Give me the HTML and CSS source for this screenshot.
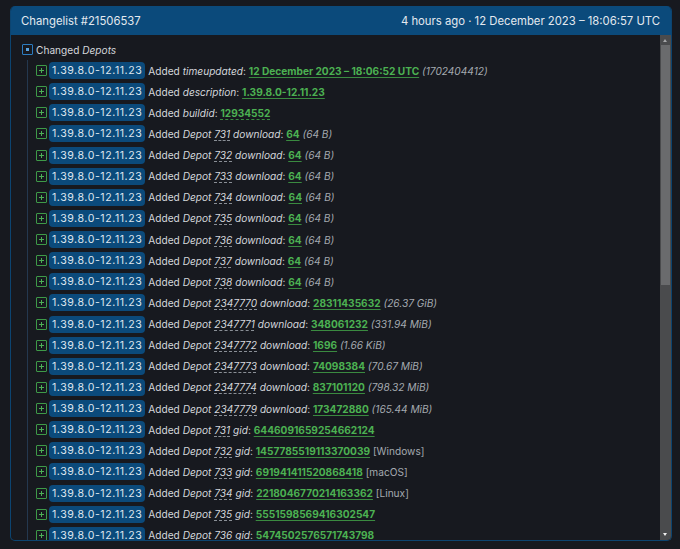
FILE: index.html
```html
<!DOCTYPE html>
<html>
<head>
<meta charset="utf-8">
<link rel="stylesheet" href="styles.css">
</head>
<body>
<div class="panel">
  <div class="header">
    <span class="title">Changelist #21506537</span>
    <span class="when">4 hours ago · 12 December 2023 – 18:06:57 UTC</span>
  </div>
  <div class="body">
    <div class="content">
      <div class="tree-head">
        <span class="toggle"><span class="dot"></span></span>
        <span>Changed <i>Depots</i></span>
      </div>
      <div class="children">
        <div class="row"><span class="plus"></span><span class="badge">1.39.8.0-12.11.23</span><span class="txt">Added <i>timeupdated</i>: <b class="val">12 December 2023 – 18:06:52 UTC</b> <i class="muted">(1702404412)</i></span></div>
        <div class="row"><span class="plus"></span><span class="badge">1.39.8.0-12.11.23</span><span class="txt">Added <i>description</i>: <b class="val">1.39.8.0-12.11.23</b></span></div>
        <div class="row"><span class="plus"></span><span class="badge">1.39.8.0-12.11.23</span><span class="txt">Added <i>buildid</i>: <b class="val dotted">12934552</b></span></div>
        <div class="row"><span class="plus"></span><span class="badge">1.39.8.0-12.11.23</span><span class="txt">Added <i>Depot <span class="dep">731</span> download</i>: <b class="val">64</b> <i class="muted">(64 B)</i></span></div>
        <div class="row"><span class="plus"></span><span class="badge">1.39.8.0-12.11.23</span><span class="txt">Added <i>Depot <span class="dep">732</span> download</i>: <b class="val">64</b> <i class="muted">(64 B)</i></span></div>
        <div class="row"><span class="plus"></span><span class="badge">1.39.8.0-12.11.23</span><span class="txt">Added <i>Depot <span class="dep">733</span> download</i>: <b class="val">64</b> <i class="muted">(64 B)</i></span></div>
        <div class="row"><span class="plus"></span><span class="badge">1.39.8.0-12.11.23</span><span class="txt">Added <i>Depot <span class="dep">734</span> download</i>: <b class="val">64</b> <i class="muted">(64 B)</i></span></div>
        <div class="row"><span class="plus"></span><span class="badge">1.39.8.0-12.11.23</span><span class="txt">Added <i>Depot <span class="dep">735</span> download</i>: <b class="val">64</b> <i class="muted">(64 B)</i></span></div>
        <div class="row"><span class="plus"></span><span class="badge">1.39.8.0-12.11.23</span><span class="txt">Added <i>Depot <span class="dep">736</span> download</i>: <b class="val">64</b> <i class="muted">(64 B)</i></span></div>
        <div class="row"><span class="plus"></span><span class="badge">1.39.8.0-12.11.23</span><span class="txt">Added <i>Depot <span class="dep">737</span> download</i>: <b class="val">64</b> <i class="muted">(64 B)</i></span></div>
        <div class="row"><span class="plus"></span><span class="badge">1.39.8.0-12.11.23</span><span class="txt">Added <i>Depot <span class="dep">738</span> download</i>: <b class="val">64</b> <i class="muted">(64 B)</i></span></div>
        <div class="row"><span class="plus"></span><span class="badge">1.39.8.0-12.11.23</span><span class="txt">Added <i>Depot <span class="dep">2347770</span> download</i>: <b class="val">28311435632</b> <i class="muted">(26.37 GiB)</i></span></div>
        <div class="row"><span class="plus"></span><span class="badge">1.39.8.0-12.11.23</span><span class="txt">Added <i>Depot <span class="dep">2347771</span> download</i>: <b class="val">348061232</b> <i class="muted">(331.94 MiB)</i></span></div>
        <div class="row"><span class="plus"></span><span class="badge">1.39.8.0-12.11.23</span><span class="txt">Added <i>Depot <span class="dep">2347772</span> download</i>: <b class="val">1696</b> <i class="muted">(1.66 KiB)</i></span></div>
        <div class="row"><span class="plus"></span><span class="badge">1.39.8.0-12.11.23</span><span class="txt">Added <i>Depot <span class="dep">2347773</span> download</i>: <b class="val">74098384</b> <i class="muted">(70.67 MiB)</i></span></div>
        <div class="row"><span class="plus"></span><span class="badge">1.39.8.0-12.11.23</span><span class="txt">Added <i>Depot <span class="dep">2347774</span> download</i>: <b class="val">837101120</b> <i class="muted">(798.32 MiB)</i></span></div>
        <div class="row"><span class="plus"></span><span class="badge">1.39.8.0-12.11.23</span><span class="txt">Added <i>Depot <span class="dep">2347779</span> download</i>: <b class="val">173472880</b> <i class="muted">(165.44 MiB)</i></span></div>
        <div class="row"><span class="plus"></span><span class="badge">1.39.8.0-12.11.23</span><span class="txt">Added <i>Depot <span class="dep">731</span> gid</i>: <b class="val">6446091659254662124</b></span></div>
        <div class="row"><span class="plus"></span><span class="badge">1.39.8.0-12.11.23</span><span class="txt">Added <i>Depot <span class="dep">732</span> gid</i>: <b class="val">1457785519113370039</b> <span class="os">[Windows]</span></span></div>
        <div class="row"><span class="plus"></span><span class="badge">1.39.8.0-12.11.23</span><span class="txt">Added <i>Depot <span class="dep">733</span> gid</i>: <b class="val">691941411520868418</b> <span class="os">[macOS]</span></span></div>
        <div class="row"><span class="plus"></span><span class="badge">1.39.8.0-12.11.23</span><span class="txt">Added <i>Depot <span class="dep">734</span> gid</i>: <b class="val">2218046770214163362</b> <span class="os">[Linux]</span></span></div>
        <div class="row"><span class="plus"></span><span class="badge">1.39.8.0-12.11.23</span><span class="txt">Added <i>Depot <span class="dep">735</span> gid</i>: <b class="val">5551598569416302547</b></span></div>
        <div class="row"><span class="plus"></span><span class="badge">1.39.8.0-12.11.23</span><span class="txt">Added <i>Depot <span class="dep">736</span> gid</i>: <b class="val">5474502576571743798</b></span></div>
      </div>
    </div>
    <div class="scrollbar">
      <div class="arrow up"></div>
      <div class="track">
        <div class="thumb"></div>
      </div>
      <div class="arrow down"></div>
    </div>
  </div>
</div>
</body>
</html>
```
FILE: styles.css
```css
html, body {
  margin: 0;
  padding: 0;
  background: #17191f;
  height: 100%;
  overflow: hidden;
}
body {
  font-family: Inter, "Noto Sans", sans-serif;
  color: #d4d7dc;
  font-size: 10.15px;
}
.panel {
  margin: 6px 0 0 10px;
  width: 662px;
  height: 535px;
  box-sizing: border-box;
  border: 1px solid #0c4470;
  border-top: none;
  border-radius: 5px;
  overflow: hidden;
  display: flex;
  flex-direction: column;
}
.header {
  height: 29px;
  flex: 0 0 29px;
  background: #0b4a7b;
  display: flex;
  align-items: center;
  justify-content: space-between;
  padding: 0 11px 0 10px;
  color: #e3e9ef;
  font-size: 11.3px;
}
.body {
  flex: 1;
  display: flex;
  min-height: 0;
}
.content {
  flex: 1;
  overflow: hidden;
  padding: 4px 0 0 11px;
}
.tree-head {
  height: 21px;
  display: flex;
  align-items: center;
  gap: 3px;
}
.toggle {
  width: 9px;
  height: 9px;
  border: 1px solid #2c7cc0;
  border-radius: 1px;
  display: flex;
  align-items: center;
  justify-content: center;
}
.dot {
  width: 3px;
  height: 3px;
  background: #5ba4e0;
}
.children {
  margin-left: 5px;
  border-left: 1px solid #24384f;
  padding-left: 8px;
}
.row {
  height: 21.14px;
  display: flex;
  align-items: center;
  white-space: nowrap;
}
.plus {
  position: relative;
  width: 9px;
  height: 9px;
  border: 1px solid #3e9a48;
  border-radius: 1px;
  flex: 0 0 auto;
  margin-right: 2px;
}
.plus::before, .plus::after {
  content: "";
  position: absolute;
  background: #4cb056;
}
.plus::before {
  left: 2px;
  top: 4px;
  width: 5px;
  height: 1px;
}
.plus::after {
  left: 4px;
  top: 2px;
  width: 1px;
  height: 5px;
}
.badge {
  background: #0b4a7b;
  color: #dde6ef;
  border-radius: 4px;
  height: 17px;
  line-height: 17px;
  padding: 0 3px;
  margin-right: 3px;
  font-size: 10.6px;
  letter-spacing: 0.55px;
}
.txt {
  color: #d4d7dc;
}
.val {
  color: #4cb152;
  font-weight: 700;
  text-decoration: underline;
  text-decoration-color: #3a8a40;
  text-underline-offset: 2px;
}
.val.dotted {
  text-decoration-style: dashed;
}
.dep {
  text-decoration: underline dashed #8a8f96;
  text-underline-offset: 2px;
}
.muted {
  color: #a4a9af;
}
.os {
  color: #a4a9af;
}
.scrollbar {
  width: 11px;
  flex: 0 0 11px;
  display: flex;
  flex-direction: column;
  background: #4a4b4d;
}
.arrow {
  height: 10px;
  flex: 0 0 10px;
  position: relative;
}
.arrow::after {
  content: "";
  position: absolute;
  left: 3px;
  width: 0;
  height: 0;
  border-left: 2.5px solid transparent;
  border-right: 2.5px solid transparent;
}
.arrow.up::after {
  top: 4px;
  border-bottom: 3px solid #a5a6a8;
}
.arrow.down::after {
  top: 3px;
  border-top: 3px solid #f0f0f0;
}
.track {
  flex: 1;
  display: flex;
  flex-direction: column;
}
.thumb {
  height: 240px;
  margin: 0 1px;
  background: #6a6b6d;
}
```
